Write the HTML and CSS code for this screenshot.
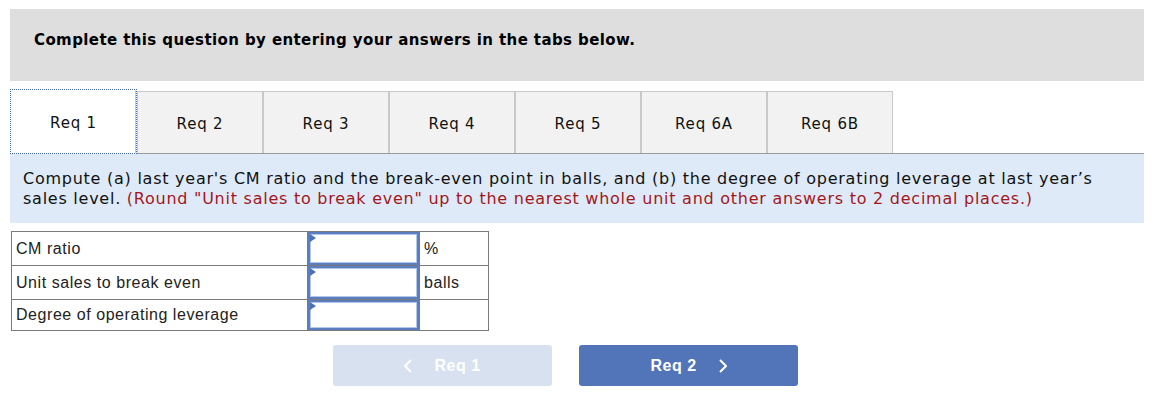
FILE: index.html
```html
<!DOCTYPE html>
<html lang="en">
<head>
<meta charset="utf-8">
<title>Req 1</title>
<link rel="stylesheet" href="styles.css">
</head>
<body>
<div class="page">
  <div class="header">Complete this question by entering your answers in the tabs below.</div>

  <div class="tabs">
    <div class="tab active">Req 1</div>
    <div class="tab">Req 2</div>
    <div class="tab">Req 3</div>
    <div class="tab">Req 4</div>
    <div class="tab">Req 5</div>
    <div class="tab">Req 6A</div>
    <div class="tab">Req 6B</div>
  </div>

  <div class="instructions">
    Compute (a) last year's CM ratio and the break-even point in balls, and (b) the degree of operating leverage at last year’s sales level. <span class="note">(Round "Unit sales to break even" up to the nearest whole unit and other answers to 2 decimal places.)</span>
  </div>

  <table class="answers">
    <tr class="r1">
      <td class="label">CM ratio</td>
      <td class="input"><div class="field"><span class="flag"></span></div></td>
      <td class="unit">%</td>
    </tr>
    <tr class="r2">
      <td class="label">Unit sales to break even</td>
      <td class="input"><div class="field"><span class="flag"></span></div></td>
      <td class="unit">balls</td>
    </tr>
    <tr class="r3">
      <td class="label">Degree of operating leverage</td>
      <td class="input"><div class="field"><span class="flag"></span></div></td>
      <td class="unit"></td>
    </tr>
  </table>

  <div class="nav">
    <button class="btn prev" type="button">
      <svg class="chev" width="8" height="14" viewBox="0 0 8 14"><polyline points="7,1 1,7 7,13" fill="none" stroke="#ffffff" stroke-width="2"/></svg>
      <span>Req 1</span>
    </button>
    <button class="btn next" type="button">
      <span>Req 2</span>
      <svg class="chev" width="8" height="14" viewBox="0 0 8 14"><polyline points="1,1 7,7 1,13" fill="none" stroke="#ffffff" stroke-width="2"/></svg>
    </button>
  </div>
</div>
</body>
</html>
```

FILE: styles.css
```css
html, body {
  margin: 0;
  padding: 0;
  background: #ffffff;
}

.page {
  padding: 9px 18px 0 10px;
  font-family: "DejaVu Sans", Verdana, sans-serif;
  color: #111111;
}

.header {
  height: 72px;
  box-sizing: border-box;
  background: #dedede;
  padding: 22px 0 0 24px;
  font-weight: bold;
  font-size: 15px;
  letter-spacing: 0.4px;
  line-height: 18px;
  color: #000000;
}

.tabs {
  display: flex;
  align-items: flex-end;
  margin-top: 8px;
  border-bottom: 1px solid #9c9c9c;
}

.tab {
  width: 126px;
  height: 62px;
  box-sizing: border-box;
  border: 1px solid #c9c9c9;
  border-bottom: none;
  background: #f2f2f2;
  display: flex;
  align-items: center;
  justify-content: center;
  padding-top: 3px;
  font-size: 15px;
  letter-spacing: 0.8px;
  color: #111111;
}

.tab.active {
  width: 127px;
  height: 65px;
  margin-bottom: -1px;
  background: #ffffff;
  border: 1px dotted #3f66b2;
  box-shadow: inset -1px 0 0 #c9c9c9;
  padding-top: 2px;
}

.instructions {
  background: #deeaf8;
  padding: 15px 13px 14px 13px;
  font-size: 16px;
  letter-spacing: 0.75px;
  line-height: 20px;
  color: #111111;
}

.note {
  color: #a3171b;
}

.answers {
  margin-top: 8px;
  margin-left: 1px;
  border-collapse: collapse;
  font-family: "Liberation Sans", Arial, sans-serif;
  font-size: 16px;
  letter-spacing: 0.55px;
  color: #222222;
}

.answers td {
  border: 1px solid #7a7a7a;
  padding: 0;
}

.r1 td, .r2 td { height: 33px; }
.r3 td { height: 30px; }

.label {
  width: 291px;
  padding-left: 4px !important;
}

.input {
  width: 111px;
}

.unit {
  width: 64px;
  padding-left: 4px !important;
}

.field {
  height: 100%;
  min-height: 31px;
  box-sizing: border-box;
  border: 2px solid #5a7ec0;
  box-shadow: inset 0 0 0 1px #b4c7ea;
  background: #ffffff;
  position: relative;
}

.r3 .field { min-height: 29px; }

.flag {
  position: absolute;
  left: 0;
  top: 0;
  width: 0;
  height: 0;
  border-top: 4px solid transparent;
  border-bottom: 4px solid transparent;
  border-left: 6px solid #4a72b8;
}

.nav {
  display: flex;
  gap: 27px;
  margin-top: 14px;
  margin-left: 323px;
}

.btn {
  width: 219px;
  height: 41px;
  border: none;
  border-radius: 3px;
  display: flex;
  align-items: center;
  justify-content: center;
  gap: 22px;
  font-family: "Liberation Sans", Arial, sans-serif;
  font-weight: bold;
  font-size: 16px;
  letter-spacing: 0.5px;
  color: #ffffff;
  padding: 0;
}

.btn.prev {
  background: #d8e1ef;
}

.btn.next {
  background: #5274b8;
}

.chev {
  display: block;
}
```
